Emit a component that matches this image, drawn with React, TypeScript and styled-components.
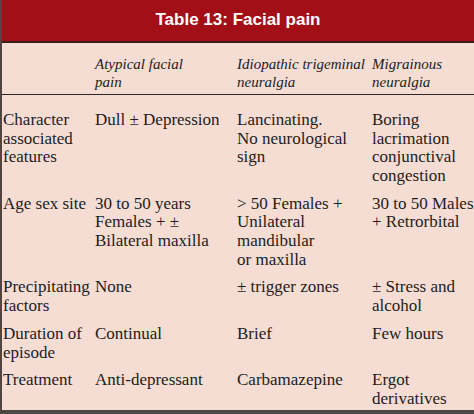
import React from "react";
import styled, { createGlobalStyle } from "styled-components";

const Global = createGlobalStyle`
  html, body { margin: 0; padding: 0; background: #f5ddd4; }
  #root { width: 474px; height: 414px; overflow: hidden; }
`;

const Frame = styled.div`
  width: 474px;
  height: 414px;
  box-sizing: border-box;
  border-left: 2px solid #544440;
  border-bottom: 4px solid #4f4542;
  background: #f5ddd4;
  display: flex;
  flex-direction: column;
  font-family: "Liberation Serif", "Times New Roman", serif;
  color: #231c1c;
`;

const TitleBar = styled.div`
  height: 43px;
  background: #a30f17;
  border-bottom: 2px solid #3e1d1a;
  display: flex;
  align-items: center;
  justify-content: center;
  font-family: "Liberation Sans", Arial, sans-serif;
  font-weight: bold;
  font-size: 17px;
  color: #ffffff;
  padding-bottom: 1px;
  box-sizing: border-box;
`;

const cols = "92px 142px 135px 1fr";

const HeadRow = styled.div`
  display: grid;
  grid-template-columns: ${cols};
  padding: 12px 0 2px 1px;
  border-bottom: 1.5px solid #2e2626;
  font-style: italic;
  font-size: 15px;
  line-height: 18.4px;
  white-space: nowrap;
`;

const Body = styled.div`
  padding: 16px 0 0 1px;
  display: flex;
  flex-direction: column;
  gap: 9px;
`;

const Row = styled.div`
  display: grid;
  grid-template-columns: ${cols};
  font-size: 17px;
  line-height: 18.7px;
  white-space: nowrap;
`;

const Cell = styled.div``;

const lines = (s: string) =>
  s.split("\n").map((l, i, a) => (
    <React.Fragment key={i}>
      {l}
      {i < a.length - 1 && <br />}
    </React.Fragment>
  ));

const rows: string[][] = [
  [
    "Character\nassociated\nfeatures",
    "Dull ± Depression",
    "Lancinating.\nNo neurological\nsign",
    "Boring\nlacrimation\nconjunctival\ncongestion",
  ],
  [
    "Age sex site",
    "30 to 50 years\nFemales + ±\nBilateral maxilla",
    "> 50 Females +\nUnilateral\nmandibular\nor maxilla",
    "30 to 50 Males\n+ Retrorbital",
  ],
  ["Precipitating\nfactors", "None", "± trigger zones", "± Stress and\nalcohol"],
  ["Duration of\nepisode", "Continual", "Brief", "Few hours"],
  ["Treatment", "Anti-depressant", "Carbamazepine", "Ergot\nderivatives"],
];

export default function App() {
  return (
    <>
      <Global />
      <Frame>
        <TitleBar>Table 13: Facial pain</TitleBar>
        <HeadRow>
          <Cell />
          <Cell>{lines("Atypical facial\npain")}</Cell>
          <Cell>{lines("Idiopathic trigeminal\nneuralgia")}</Cell>
          <Cell>{lines("Migrainous\nneuralgia")}</Cell>
        </HeadRow>
        <Body>
          {rows.map((r, i) => (
            <Row key={i}>
              {r.map((c, j) => (
                <Cell key={j}>{lines(c)}</Cell>
              ))}
            </Row>
          ))}
        </Body>
      </Frame>
    </>
  );
}
